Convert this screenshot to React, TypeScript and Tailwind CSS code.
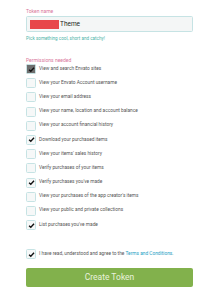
import React from 'react';

const permissions: Array<{ label: string; checked: boolean; focused?: boolean }> = [
  { label: 'View and search Envato sites', checked: true, focused: true },
  { label: 'View your Envato Account username', checked: false },
  { label: 'View your email address', checked: false },
  { label: 'View your name, location and account balance', checked: false },
  { label: 'View your account financial history', checked: false },
  { label: 'Download your purchased items', checked: true },
  { label: "View your items' sales history", checked: false },
  { label: 'Verify purchases of your items', checked: false },
  { label: "Verify purchases you've made", checked: true },
  { label: "View your purchases of the app creator's items", checked: false },
  { label: 'View your public and private collections', checked: false },
  { label: "List purchases you've made", checked: true },
];

function Check({ checked, focused }: { checked: boolean; focused?: boolean }) {
  return (
    <span
      className={`flex h-[10px] w-[10px] shrink-0 items-center justify-center rounded-[1.5px] border border-[#c6e3e4] ${
        focused ? 'bg-[#6e6e6e]' : 'bg-[#f6f8f8]'
      }`}
    >
      {checked && (
        <svg viewBox="0 0 10 10" className="h-[7px] w-[7px]">
          <path d="M1.5 5.2 L4 7.5 L8.6 2.4" fill="none" stroke="#111" strokeWidth="1.9" />
        </svg>
      )}
    </span>
  );
}

export default function App() {
  return (
    <div className="min-h-[300px] w-[223px] bg-white pl-[26px] pr-[30px] pt-[8px] font-['Roboto',sans-serif] text-[#555]">
      {/* Token name */}
      <div className="text-[5px] leading-[6px] text-[#d9779b]">Token name</div>
      <div className="mt-[2px] flex h-[16px] w-[167px] items-center rounded-[1.5px] border border-[#c6e3e4] bg-[#f4f6f6] pl-[3px]">
        <span className="h-[9px] w-[29px] bg-[#e8474a]" />
        <span className="ml-[1px] text-[6.5px] leading-none text-[#222]">Theme</span>
      </div>
      <div className="mt-[4px] text-[4.6px] leading-[5px] text-[#4db4a8]">Pick something cool, short and catchy!</div>

      {/* Permissions */}
      <div className="mt-[16px] text-[5px] leading-[6px] text-[#d9779b]">Permissions needed</div>
      <div className="mt-[1px] flex flex-col gap-[4.2px]">
        {permissions.map(p => (
          <div key={p.label} className="flex items-center gap-[3px]">
            <Check checked={p.checked} focused={p.focused} />
            <span className="text-[4.8px] leading-none text-[#555]">{p.label}</span>
          </div>
        ))}
      </div>

      {/* Terms */}
      <div className="mt-[19px] flex items-center gap-[3px]">
        <Check checked />
        <span className="text-[4.8px] leading-none text-[#555]">
          I have read, understood and agree to the <span className="text-[#1ea0c4]">Terms and Conditions</span>.
        </span>
      </div>

      <button
        type="button"
        className="mt-[9px] flex h-[19px] w-[167px] items-center justify-center rounded-[2px] bg-[#82b14c] text-[8.5px] leading-none text-[#e9f2dd]"
      >
        Create Token
      </button>
    </div>
  );
}
